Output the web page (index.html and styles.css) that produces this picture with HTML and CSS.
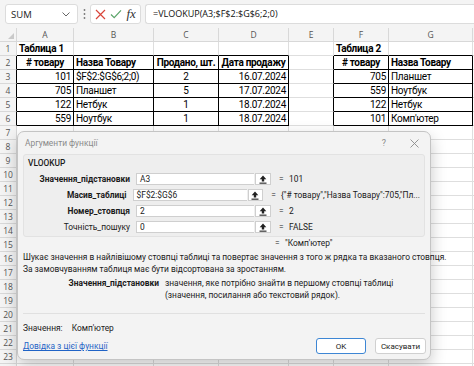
FILE: index.html
```html
<!DOCTYPE html>
<html lang="uk">

<head>
    <meta charset="UTF-8" />
    <meta name="viewport" content="width=device-width, initial-scale=1.0" />
    <title>Аргументи функції</title>
    <link rel="stylesheet" href="styles.css">
</head>

<body>
    <div class="app">

        <!-- Formula Bar -->
        <div class="formula-bar">
            <div class="name-box">
                <span>SUM</span>
                <svg width="8" height="5" viewBox="0 0 8 5"><path d="M0.5 0.5 L4 4 L7.5 0.5" fill="none" stroke="#666" stroke-width="1"/></svg>
            </div>
            <div class="dots">
                <svg width="3" height="12" viewBox="0 0 3 12"><circle cx="1.5" cy="2" r="0.9" fill="#777"/><circle cx="1.5" cy="6" r="0.9" fill="#777"/><circle cx="1.5" cy="10" r="0.9" fill="#777"/></svg>
            </div>
            <div class="fx-box">
                <svg width="11" height="11" viewBox="0 0 11 11"><path d="M1 1 L10 10 M10 1 L1 10" stroke="#d9453a" stroke-width="1.2" fill="none"/></svg>
                <svg width="12" height="10" viewBox="0 0 12 10"><path d="M1 5.5 L4.2 8.7 L11 1.3" stroke="#5aa469" stroke-width="1.2" fill="none"/></svg>
                <span class="fx">fx</span>
            </div>
            <div class="formula-input">=VLOOKUP(A3;$F$2:$G$6;2;0)</div>
        </div>

        <!-- Sheet -->
        <table class="sheet">
            <colgroup>
                <col class="w-rh"><col class="w-a"><col class="w-b"><col class="w-c"><col class="w-d"><col class="w-e"><col class="w-f"><col class="w-g"><col class="w-h">
            </colgroup>
            <tr class="hdr">
                <td class="corner"><svg width="6" height="6" viewBox="0 0 6 6"><path d="M6 0 L6 6 L0 6 Z" fill="#c9c9c9"/></svg></td>
                <td>A</td><td>B</td><td>C</td><td>D</td><td>E</td><td>F</td><td>G</td><td></td>
            </tr>
            <tr>
                <td class="rh">1</td>
                <td class="bb bold">Таблица 1</td><td class="bb"></td><td class="bb"></td><td class="bb"></td><td></td>
                <td class="bb bold">Таблица 2</td><td class="bb"></td><td></td>
            </tr>
            <tr>
                <td class="rh br">2</td>
                <td class="b c bold"># товару</td><td class="b bold">Назва Товару</td><td class="b c bold">Продано, шт.</td><td class="b c bold">Дата продажу</td><td class="br"></td>
                <td class="b c bold"># товару</td><td class="b bold">Назва Товару</td><td></td>
            </tr>
            <tr>
                <td class="rh br">3</td>
                <td class="b r">101</td><td class="b">$F$2:$G$6;2;0)</td><td class="b c">2</td><td class="b r">16.07.2024</td><td class="br"></td>
                <td class="b r">705</td><td class="b">Планшет</td><td></td>
            </tr>
            <tr>
                <td class="rh br">4</td>
                <td class="b r">705</td><td class="b">Планшет</td><td class="b c">5</td><td class="b r">17.07.2024</td><td class="br"></td>
                <td class="b r">559</td><td class="b">Ноутбук</td><td></td>
            </tr>
            <tr>
                <td class="rh br">5</td>
                <td class="b r">122</td><td class="b">Нетбук</td><td class="b c">1</td><td class="b r">18.07.2024</td><td class="br"></td>
                <td class="b r">122</td><td class="b">Нетбук</td><td></td>
            </tr>
            <tr>
                <td class="rh br">6</td>
                <td class="b r">559</td><td class="b">Ноутбук</td><td class="b c">1</td><td class="b r">18.07.2024</td><td class="br"></td>
                <td class="b r">101</td><td class="b">Комп'ютер</td><td></td>
            </tr>
            <tr><td class="rh">7</td><td></td><td></td><td></td><td></td><td></td><td></td><td></td><td></td></tr>
            <tr><td class="rh">8</td><td></td><td></td><td></td><td></td><td></td><td></td><td></td><td></td></tr>
            <tr><td class="rh">9</td><td></td><td></td><td></td><td></td><td></td><td></td><td></td><td></td></tr>
            <tr><td class="rh">10</td><td></td><td></td><td></td><td></td><td></td><td></td><td></td><td></td></tr>
            <tr><td class="rh">11</td><td></td><td></td><td></td><td></td><td></td><td></td><td></td><td></td></tr>
            <tr><td class="rh">12</td><td></td><td></td><td></td><td></td><td></td><td></td><td></td><td></td></tr>
            <tr><td class="rh">13</td><td></td><td></td><td></td><td></td><td></td><td></td><td></td><td></td></tr>
            <tr><td class="rh">14</td><td></td><td></td><td></td><td></td><td></td><td></td><td></td><td></td></tr>
            <tr><td class="rh">15</td><td></td><td></td><td></td><td></td><td></td><td></td><td></td><td></td></tr>
            <tr><td class="rh">16</td><td></td><td></td><td></td><td></td><td></td><td></td><td></td><td></td></tr>
            <tr><td class="rh">17</td><td></td><td></td><td></td><td></td><td></td><td></td><td></td><td></td></tr>
            <tr><td class="rh">18</td><td></td><td></td><td></td><td></td><td></td><td></td><td></td><td></td></tr>
            <tr><td class="rh">19</td><td></td><td></td><td></td><td></td><td></td><td></td><td></td><td></td></tr>
            <tr><td class="rh">20</td><td></td><td></td><td></td><td></td><td></td><td></td><td></td><td></td></tr>
            <tr><td class="rh">21</td><td></td><td></td><td></td><td></td><td></td><td></td><td></td><td></td></tr>
            <tr><td class="rh">22</td><td></td><td></td><td></td><td></td><td></td><td></td><td></td><td></td></tr>
            <tr><td class="rh">23</td><td></td><td></td><td></td><td></td><td></td><td></td><td></td><td></td></tr>
            <tr><td class="rh"></td><td></td><td></td><td></td><td></td><td></td><td></td><td></td><td></td></tr>
        </table>

        <!-- Function Arguments Dialog -->
        <div class="dialog">
            <div class="dlg-title">
                <span>Аргументи функції</span>
                <div class="dlg-controls">
                    <span class="help">?</span>
                    <svg width="9" height="9" viewBox="0 0 9 9"><path d="M0.5 0.5 L8.5 8.5 M8.5 0.5 L0.5 8.5" stroke="#8a8a8a" stroke-width="0.9" fill="none"/></svg>
                </div>
            </div>

            <div class="arg-group">
                <div class="fn-name">VLOOKUP</div>

                <div class="arg-row">
                    <span class="arg-label bold">Значення_підстановки</span>
                    <span class="arg-input">A3</span>
                    <span class="arg-btn"><svg width="8" height="9" viewBox="0 0 8 9"><path d="M4 0.5 L7.3 4.2 H5.2 V6.6 H2.8 V4.2 H0.7 Z" fill="#222"/><rect x="0.5" y="7.6" width="7" height="1.1" fill="#222"/></svg></span>
                    <span class="arg-eq">=</span>
                    <span class="arg-val">101</span>
                </div>
                <div class="arg-row">
                    <span class="arg-label bold">Масив_таблиці</span>
                    <span class="arg-input">$F$2:$G$6</span>
                    <span class="arg-btn"><svg width="8" height="9" viewBox="0 0 8 9"><path d="M4 0.5 L7.3 4.2 H5.2 V6.6 H2.8 V4.2 H0.7 Z" fill="#222"/><rect x="0.5" y="7.6" width="7" height="1.1" fill="#222"/></svg></span>
                    <span class="arg-eq">=</span>
                    <span class="arg-val">{"# товару","Назва Товару":705,"Пл...</span>
                </div>
                <div class="arg-row">
                    <span class="arg-label bold">Номер_стовпця</span>
                    <span class="arg-input">2</span>
                    <span class="arg-btn"><svg width="8" height="9" viewBox="0 0 8 9"><path d="M4 0.5 L7.3 4.2 H5.2 V6.6 H2.8 V4.2 H0.7 Z" fill="#222"/><rect x="0.5" y="7.6" width="7" height="1.1" fill="#222"/></svg></span>
                    <span class="arg-eq">=</span>
                    <span class="arg-val">2</span>
                </div>
                <div class="arg-row">
                    <span class="arg-label">Точність_пошуку</span>
                    <span class="arg-input">0</span>
                    <span class="arg-btn"><svg width="8" height="9" viewBox="0 0 8 9"><path d="M4 0.5 L7.3 4.2 H5.2 V6.6 H2.8 V4.2 H0.7 Z" fill="#222"/><rect x="0.5" y="7.6" width="7" height="1.1" fill="#222"/></svg></span>
                    <span class="arg-eq">=</span>
                    <span class="arg-val">FALSE</span>
                </div>
            </div>

            <div class="result-line">
                <span class="arg-eq">=</span>
                <span>"Комп'ютер"</span>
            </div>

            <div class="fn-desc">
                Шукає значення в найлівішому стовпці таблиці та повертає значення з того ж рядка та вказаного стовпця.<br>
                За замовчуванням таблиця має бути відсортована за зростанням.
            </div>

            <div class="arg-desc">
                <span class="arg-desc-label bold">Значення_підстановки</span>
                <span class="arg-desc-text">значення, яке потрібно знайти в першому стовпці таблиці<br>(значення, посилання або текстовий рядок).</span>
            </div>

            <div class="dlg-value">
                <span>Значення:</span>
                <span class="dlg-value-text">Комп'ютер</span>
            </div>

            <div class="dlg-footer">
                <a class="help-link" href="#">Довідка з цієї функції</a>
                <div class="dlg-buttons">
                    <button class="btn btn-ok">OK</button>
                    <button class="btn">Скасувати</button>
                </div>
            </div>
        </div>

    </div>
</body>

</html>
```

FILE: styles.css
```css
/* === Reset === */
* {
    margin: 0;
    padding: 0;
    box-sizing: border-box;
}

body {
    background-color: #FFFFFF;
    color: #000000;
    font-family: "Roboto", "Liberation Sans", sans-serif;
    overflow: hidden;
}

.app {
    position: relative;
    width: 474px;
    height: 366px;
    overflow: hidden;
}

.bold {
    font-weight: bold;
}

/* === Formula Bar === */
.formula-bar {
    display: flex;
    align-items: center;
    height: 28px;
    padding-left: 5px;
    background-color: #F4F4F4;
    font-family: "Open Sans", sans-serif;
}

.name-box {
    display: flex;
    align-items: center;
    justify-content: space-between;
    width: 73px;
    height: 20px;
    padding: 0 7px 0 5px;
    background-color: #FFFFFF;
    border: 1px solid #DCDCDC;
    border-radius: 3px;
    font-size: 9.5px;
    color: #222222;
}

.dots {
    display: flex;
    justify-content: center;
    width: 12px;
}

.fx-box {
    display: flex;
    align-items: center;
    justify-content: space-around;
    width: 51px;
    height: 20px;
    padding: 0 2px;
    background-color: #FFFFFF;
    border: 1px solid #DCDCDC;
    border-radius: 3px;
}

.fx {
    font-family: "Liberation Serif", serif;
    font-style: italic;
    font-size: 13px;
    color: #333333;
}

.formula-input {
    flex: 1;
    height: 20px;
    margin-left: 4px;
    padding-left: 7px;
    background-color: #FFFFFF;
    border: 1px solid #DCDCDC;
    border-right: none;
    border-radius: 3px 0 0 3px;
    font-size: 9px;
    line-height: 18px;
    color: #111111;
}

/* === Sheet === */
.sheet {
    border-collapse: separate;
    border-spacing: 0;
    table-layout: fixed;
    width: 513px;
    font-size: 10px;
    letter-spacing: -0.3px;
}

.w-rh { width: 17px; }
.w-a { width: 57px; }
.w-b { width: 80px; }
.w-c { width: 65px; }
.w-d { width: 70px; }
.w-e { width: 45px; }
.w-f { width: 55px; }
.w-g { width: 84px; }
.w-h { width: 40px; }

.sheet td {
    height: 14px;
    padding: 0 2px;
    line-height: 13px;
    border-right: 1px solid #DEDEDE;
    border-bottom: 1px solid #DEDEDE;
    white-space: nowrap;
    overflow: hidden;
}

.sheet .hdr td {
    background-color: #F4F4F4;
    border-color: #D8D8D8;
    text-align: center;
    font-family: "Open Sans", sans-serif;
    font-size: 8.5px;
    letter-spacing: 0;
    color: #555555;
}

.sheet .hdr .corner {
    text-align: right;
    vertical-align: bottom;
    padding: 0 2px 2px 0;
    line-height: 6px;
}

.sheet .rh {
    background-color: #F4F4F4;
    border-color: #D8D8D8;
    text-align: center;
    padding: 0;
    font-family: "Open Sans", sans-serif;
    font-size: 8.5px;
    letter-spacing: 0;
    color: #555555;
}

.sheet .r { text-align: right; }
.sheet .c { text-align: center; }

.sheet .b {
    border-right-color: #000000;
    border-bottom-color: #000000;
}

.sheet .br { border-right-color: #000000; }
.sheet .bb { border-bottom-color: #000000; }

/* === Dialog === */
.dialog {
    position: absolute;
    left: 17px;
    top: 131px;
    width: 414px;
    height: 229px;
    display: flex;
    flex-direction: column;
    padding: 0 5px;
    background-color: #F3F3F3;
    border: 1px solid #C4C4C4;
    border-radius: 7px;
    box-shadow: 0 6px 16px rgba(0, 0, 0, 0.22);
    font-family: "Roboto", sans-serif;
    font-size: 8.4px;
    color: #1A1A1A;
}

.dialog > * {
    flex-shrink: 0;
}

.dlg-title {
    display: flex;
    align-items: center;
    justify-content: space-between;
    height: 22px;
    padding-left: 2px;
    color: #8A8A8A;
}

.dlg-controls {
    display: flex;
    align-items: center;
    gap: 24px;
    padding-right: 6px;
}

.help {
    font-size: 9px;
}

.arg-group {
    height: 83px;
    padding: 2px 4px 0;
    background-color: #EEEEEE;
    border: 1px solid #E2E2E2;
    border-radius: 3px;
}

.fn-name {
    height: 12px;
    line-height: 12px;
    margin-bottom: 2px;
    font-weight: 500;
}

.arg-row {
    display: flex;
    align-items: center;
    height: 16px;
}

.arg-label {
    width: 102px;
    text-align: right;
}

.arg-input {
    width: 118px;
    height: 12px;
    margin-left: 6px;
    padding-left: 3px;
    line-height: 11px;
    background-color: #FFFFFF;
    border: 1px solid #CFCFCF;
    border-right: none;
}

.arg-btn {
    display: flex;
    align-items: center;
    justify-content: center;
    width: 16px;
    height: 12px;
    margin-left: 1px;
    background-color: #FFFFFF;
    border: 1px solid #CFCFCF;
}

.arg-eq {
    width: 10px;
    margin-left: 8px;
}

.arg-val {
    white-space: nowrap;
}

.result-line {
    display: flex;
    height: 12px;
    padding-left: 244px;
    line-height: 12px;
}

.fn-desc {
    line-height: 12px;
    margin-top: 2px;
    white-space: nowrap;
}

.arg-desc {
    display: flex;
    gap: 6px;
    margin-top: 2px;
    line-height: 12px;
}

.arg-desc-label {
    width: 136px;
    text-align: right;
}

.dlg-value {
    display: flex;
    gap: 9px;
    margin-top: 12px;
    padding-top: 8px;
    border-top: 1px solid #E0E0E0;
    line-height: 12px;
}

.dlg-footer {
    display: flex;
    align-items: center;
    justify-content: space-between;
    margin-top: auto;
    margin-right: -1px;
    padding-bottom: 5px;
}

.help-link {
    color: #1F63C6;
    text-decoration: underline;
}

.dlg-buttons {
    display: flex;
    gap: 9px;
}

.btn {
    width: 51px;
    height: 16px;
    background-color: #FFFFFF;
    border: 1px solid #D0D0D0;
    border-radius: 3px;
    font-family: "Roboto", sans-serif;
    font-size: 8px;
    color: #1A1A1A;
}

.btn-ok {
    width: 50px;
    border-color: #3D86D4;
}
```
